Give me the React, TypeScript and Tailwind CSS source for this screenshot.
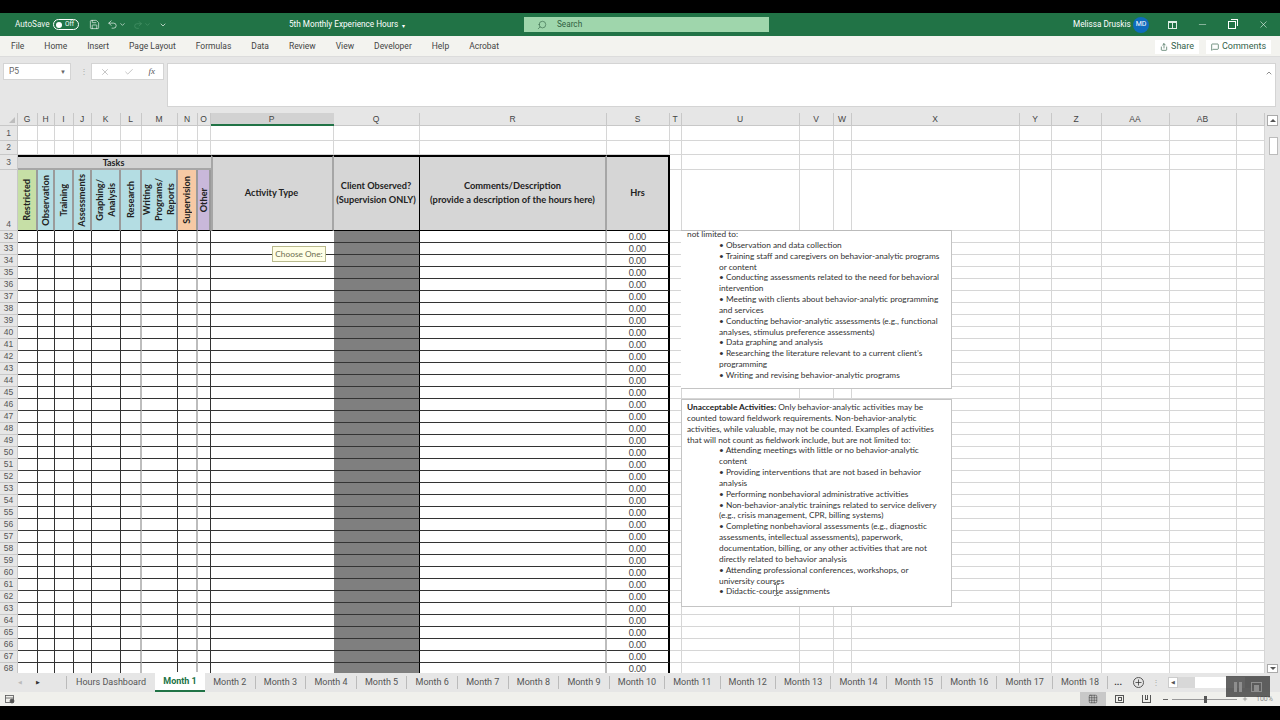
import { Check, ChevronDown, ChevronUp, Grid3x3, MessageSquare, Minus, Plus, Redo2, Save, Search, Share, Undo2, X } from 'lucide-react';

const uiFont = 'font-["Roboto","Open_Sans",sans-serif]';
const sheetFont = 'font-["Lato","Liberation_Sans",sans-serif]';

const menuItems = ['File', 'Home', 'Insert', 'Page Layout', 'Formulas', 'Data', 'Review', 'View', 'Developer', 'Help', 'Acrobat'];

const columns = ['G', 'H', 'I', 'J', 'K', 'L', 'M', 'N', 'O', 'P', 'Q', 'R', 'S', 'T', 'U', 'V', 'W', 'X', 'Y', 'Z', 'AA', 'AB', ''];

const taskHeaders = [
  { label: ['Restricted'], bg: 'bg-[#c6dfa6]' },
  { label: ['Observation'], bg: 'bg-[#b4dde3]' },
  { label: ['Training'], bg: 'bg-[#b4dde3]' },
  { label: ['Assessments'], bg: 'bg-[#b4dde3]' },
  { label: ['Graphing/', 'Analysis'], bg: 'bg-[#b4dde3]' },
  { label: ['Research'], bg: 'bg-[#b4dde3]' },
  { label: ['Writing', 'Programs/', 'Reports'], bg: 'bg-[#b4dde3]' },
  { label: ['Supervision'], bg: 'bg-[#f6c9a4]' },
  { label: ['Other'], bg: 'bg-[#c9b8da]' },
];

// per column border for the data rows, G through O
const dataCell = [
  'border-r border-r-[#333]',
  'border-r border-r-[#333]',
  'border-r border-r-[#333]',
  'border-r border-r-[#333]',
  'border-r border-r-[#333]',
  'border-r-2 border-r-[#bdbdbd]',
  'border-r border-r-[#333]',
  'border-r-2 border-r-[#bdbdbd]',
  'border-r border-r-[#333]',
];

const rows = Array.from({ length: 37 }, (_, i) => 32 + i);
const tabs = Array.from({ length: 17 }, (_, i) => `Month ${i + 2}`);

const acceptable = [
  'not limited to:',
  '• Observation and data collection',
  '• Training staff and caregivers on behavior-analytic programs',
  'or content',
  '• Conducting assessments related to the need for behavioral',
  'intervention',
  '• Meeting with clients about behavior-analytic programming',
  'and services',
  '• Conducting behavior-analytic assessments (e.g., functional',
  'analyses, stimulus preference assessments)',
  '• Data graphing and analysis',
  '• Researching the literature relevant to a current client’s',
  'programming',
  '• Writing and revising behavior-analytic programs',
];

const unacceptableIntro = [
  'counted toward fieldwork requirements. Non-behavior-analytic',
  'activities, while valuable, may not be counted. Examples of activities',
  'that will not count as fieldwork include, but are not limited to:',
];

const unacceptable = [
  '• Attending meetings with little or no behavior-analytic',
  'content',
  '• Providing interventions that are not based in behavior',
  'analysis',
  '• Performing nonbehavioral administrative activities',
  '• Non-behavior-analytic trainings related to service delivery',
  '(e.g., crisis management, CPR, billing systems)',
  '• Completing nonbehavioral assessments (e.g., diagnostic',
  'assessments, intellectual assessments), paperwork,',
  'documentation, billing, or any other activities that are not',
  'directly related to behavior analysis',
  '• Attending professional conferences, workshops, or',
  'university courses',
  '• Didactic-course assignments',
];

function RowNum({ children }: { children?: React.ReactNode }) {
  return (
    <div className="flex items-center justify-center bg-[#e6e6e6] border-r border-b border-[#c8c8c8] text-[8.5px] text-[#555] font-['Liberation_Sans',sans-serif] leading-none">
      {children}
    </div>
  );
}

function LightCells({ count }: { count: number }) {
  return (
    <>
      {Array.from({ length: count }, (_, i) => (
        <div key={i} className="border-r border-b border-[#d6d6d6] bg-white" />
      ))}
    </>
  );
}

export default function App() {
  return (
    <div className={`relative w-[1280px] h-[720px] bg-black flex flex-col overflow-hidden ${uiFont}`}>
      {/* top letterbox */}
      <div className="h-[13px] shrink-0" />

      {/* Title bar */}
      <div className="h-[23px] shrink-0 bg-[#217346] text-white flex items-center text-[8.2px]">
        <span className="ml-[15px] w-[38px] whitespace-nowrap text-[#f0f6f2]">AutoSave</span>
        <div className="flex items-center w-[26px] h-[11px] rounded-full border border-white pl-[2px] gap-[3px] text-[6.5px] leading-none">
          <span className="w-[6px] h-[6px] rounded-full bg-white" />
          Off
        </div>
        <Save className="ml-[10px] w-[11px] h-[11px]" strokeWidth={1.4} />
        <Undo2 className="ml-[7px] w-[11px] h-[11px]" strokeWidth={1.4} />
        <ChevronDown className="ml-[1px] w-[7px] h-[7px]" />
        <Redo2 className="ml-[7px] w-[10px] h-[10px] text-[#4f9a6f]" strokeWidth={1.4} />
        <ChevronDown className="ml-[1px] w-[7px] h-[7px] text-[#4f9a6f]" />
        <ChevronDown className="ml-[8px] w-[8px] h-[8px]" />
        <span className="ml-[122px] w-[235px] whitespace-nowrap">
          5th Monthly Experience Hours <span className="ml-[2px] text-[6px] align-middle">▾</span>
        </span>
        <div className="flex items-center w-[245px] h-[15px] bg-[#9fd6ac] text-[#2f5f41]">
          <Search className="ml-[13px] w-[10px] h-[10px] -scale-x-100" strokeWidth={1.4} />
          <span className="ml-[10px]">Search</span>
        </div>
        <span className="ml-[304px] w-[60px] whitespace-nowrap">Melissa Druskis</span>
        <div className="w-[16px] h-[16px] rounded-full bg-[#0f6cbd] flex items-center justify-center text-[7px]">MD</div>
        <div className="ml-[19px] w-[9px] h-[8px] border border-[#dfeee5] border-t-2 flex justify-center">
          <span className="w-px bg-[#dfeee5]" />
        </div>
        <Minus className="ml-[20px] w-[11px] h-[11px]" strokeWidth={1} />
        <div className="relative ml-[20px] w-[8px] h-[8px] border border-white">
          <span className="absolute -top-[3px] -right-[3px] w-[7px] h-[7px] border-t border-r border-white" />
        </div>
        <X className="ml-[22px] w-[11px] h-[11px]" strokeWidth={1.2} />
      </div>

      {/* Menu bar */}
      <div className="h-[20px] shrink-0 bg-[#f3f3ef] flex items-center pt-[1px] text-[8.5px] text-[#444]">
        <div className="ml-[11px] flex items-center gap-[20px]">
          {menuItems.map((item) => (
            <span key={item} className="whitespace-nowrap">{item}</span>
          ))}
        </div>
        <div className="ml-auto mr-[9px] flex items-center gap-[7px] text-[#33614a]">
          <div className="flex items-center justify-center gap-[3px] w-[44px] h-[14px] bg-white text-[9px]">
            <Share className="w-[8px] h-[8px]" />
            Share
          </div>
          <div className="flex items-center justify-center gap-[3px] w-[65px] h-[14px] bg-white text-[9px]">
            <MessageSquare className="w-[8px] h-[8px]" />
            Comments
          </div>
        </div>
      </div>

      {/* Formula bar */}
      <div className="h-[57px] shrink-0 bg-[#e6e6e6] border-t border-[#dcdcdc] flex items-start pt-[6px] text-[#666]">
        <div className="ml-[3px] w-[68px] h-[17px] bg-white border border-[#d4d4d4] flex items-center justify-between pl-[5px] pr-[4px] text-[8.5px]">
          P5
          <span className="text-[6px]">▼</span>
        </div>
        <span className="ml-[9px] w-[11px] text-[8px] leading-[17px] text-[#aaa]">⋮</span>
        <div className="w-[73px] h-[17px] bg-white border border-[#d4d4d4] flex items-center justify-around px-[1px] text-[#bbb]">
          <X className="w-[10px] h-[10px]" />
          <Check className="w-[10px] h-[10px]" />
          <span className="font-['Liberation_Serif',serif] italic text-[9px] text-[#555]">fx</span>
        </div>
        <div className="relative ml-[3px] w-[1109px] h-[44px] bg-white border border-[#d4d4d4]">
          <ChevronUp className="absolute right-[2px] top-[5px] w-[8px] h-[8px] text-[#555]" />
        </div>
      </div>

      {/* Sheet */}
      <div className="relative h-[560px] shrink-0 flex bg-white overflow-hidden">
        <div className="relative w-[1265px] h-full overflow-hidden">
          <div className={`grid grid-cols-[18px_20px_17px_19px_18px_29px_21px_36px_20px_13px_123px_86px_187px_63px_12px_118px_34px_18px_168px_32px_50px_68px_67px_28px] grid-rows-[13px_15px_14px_15px_61px_repeat(37,12px)] ${sheetFont}`}>
            {/* column letters */}
            <div className="bg-[#e6e6e6] border-r border-b border-[#c8c8c8] flex items-end justify-end pr-[2px] pb-[2px]">
              <span className="w-0 h-0 border-l-[6px] border-l-transparent border-b-[6px] border-b-[#bdbdbd]" />
            </div>
            {columns.map((col) => (
              <div
                key={col}
                className={`flex items-center justify-center text-[8.5px] leading-none text-[#444] font-['Liberation_Sans',sans-serif] ${
                  col === 'P'
                    ? 'bg-[#d2d2d2] pr-[2px] pt-[1px] border-b-2 border-b-[#217346]'
                    : 'bg-[#e6e6e6] pr-[1px] border-r border-r-[#c8c8c8] border-b border-b-[#c8c8c8]'
                }`}
              >
                {col}
              </div>
            ))}

            {/* rows 1 and 2 */}
            <RowNum>1</RowNum>
            <LightCells count={23} />
            <RowNum>2</RowNum>
            <LightCells count={23} />

            {/* rows 3 and 4, the table head */}
            <RowNum>3</RowNum>
            <div className="col-span-9 flex items-center justify-center pr-[2px] bg-[#d2d2d2] border-t-2 border-t-black border-b-2 border-b-[#a6a6a6] text-[9px] font-bold text-[#222] leading-none">
              Tasks
            </div>
            <div className="row-span-2 flex items-center justify-center pr-[2px] pb-[1px] bg-[#d6d6d6] border-t-2 border-t-black border-l-2 border-l-[#a6a6a6] border-r-2 border-r-[#a6a6a6] border-b border-b-black text-[9.2px] font-bold text-[#222]">
              Activity Type
            </div>
            <div className="row-span-2 flex items-center justify-center text-center pr-[1px] pb-[2px] bg-[#d6d6d6] border-t-2 border-t-black border-r border-r-black border-b border-b-black text-[9.2px] leading-[13.5px] font-bold text-[#222]">
              Client Observed?<br />(Supervision ONLY)
            </div>
            <div className="row-span-2 flex items-center justify-center text-center pb-[2px] bg-[#d6d6d6] border-t-2 border-t-black border-r-2 border-r-[#a6a6a6] border-b border-b-black text-[9.3px] leading-[13.5px] font-bold text-[#222]">
              Comments/Description<br />(provide a description of the hours here)
            </div>
            <div className="row-span-2 flex items-center justify-center pb-[1px] bg-[#d6d6d6] border-t-2 border-t-black border-r-2 border-r-black border-b border-b-black text-[9.2px] font-bold text-[#222]">
              Hrs
            </div>
            <LightCells count={10} />

            <div className="flex items-end justify-center bg-[#e6e6e6] border-r border-b border-[#c8c8c8] text-[8.5px] text-[#555] font-['Liberation_Sans',sans-serif] leading-none pb-[2px]">
              4
            </div>
            {taskHeaders.map((task) => (
              <div
                key={task.label[0]}
                className={`flex items-center justify-center ${task.bg} border-r-2 border-r-[#9a9a9a] border-b border-b-black`}
              >
                <div className="[writing-mode:vertical-rl] rotate-180 text-center text-[9.2px] leading-[12px] font-bold text-[#222] whitespace-nowrap">
                  {task.label.map((line) => (
                    <div key={line}>{line}</div>
                  ))}
                </div>
              </div>
            ))}
            <LightCells count={10} />

            {/* data rows */}
            {rows.map((row) => (
              <div key={row} className="contents">
                <RowNum>{row}</RowNum>
                {dataCell.map((cls, i) => (
                  <div key={i} className={`bg-white border-b border-b-[#333] ${cls}`} />
                ))}
                <div className="bg-white border-b border-b-[#333]" />
                <div className="bg-[#7f7f7f] border-b border-b-[#333] border-r border-r-black" />
                <div className="bg-white border-b border-b-[#333] border-r-2 border-r-[#bdbdbd]" />
                <div className="flex items-center justify-center pt-[1px] bg-white border-b border-b-[#333] border-r-2 border-r-black text-[8.8px] leading-none text-[#444]">
                  0.00
                </div>
                <LightCells count={10} />
              </div>
            ))}
          </div>

          {/* text boxes floating over the sheet */}
          <div className={`absolute left-[681px] top-[117px] w-[271px] h-[159px] bg-white border-t border-t-[#bbb] border-b border-r border-[#c4c4c4] overflow-hidden text-[8.3px] leading-[10.85px] text-[#333] ${sheetFont}`}>
            <p className="pl-[6px] -mt-[2px]">{acceptable[0]}</p>
            <div className="pl-[38px] whitespace-nowrap">
              {acceptable.slice(1).map((line) => (
                <p key={line}>{line}</p>
              ))}
            </div>
          </div>
          <div className={`absolute left-[681px] top-[286px] w-[271px] h-[208px] bg-white border border-[#c4c4c4] pt-[2px] text-[8.3px] leading-[10.85px] text-[#333] ${sheetFont}`}>
            <div className="pl-[5px] whitespace-nowrap">
              <p><b className="text-[#222]">Unacceptable Activities:</b> Only behavior-analytic activities may be</p>
              {unacceptableIntro.map((line) => (
                <p key={line}>{line}</p>
              ))}
            </div>
            <div className="pl-[37px] whitespace-nowrap">
              {unacceptable.map((line) => (
                <p key={line}>{line}</p>
              ))}
            </div>
          </div>

          {/* data validation hint */}
          <div className={`absolute left-[272px] top-[133px] w-[54px] h-[16px] flex items-center justify-center bg-[#ffffe6] border border-[#b9b98c] text-[8.3px] text-[#6e6e50] ${sheetFont}`}>
            Choose One:
          </div>

          {/* mouse cursor */}
          <svg className="absolute left-[773px] top-[471px]" width="7" height="12" viewBox="0 0 7 12" fill="none" stroke="#666" strokeWidth="0.8">
            <path d="M1 .5h2l.5.5.5-.5h2M3.5 1v10M1 11.5h2l.5-.5.5.5h2" />
          </svg>
        </div>

        {/* vertical scrollbar */}
        <div className="w-[15px] h-full bg-[#e6e6e6] flex flex-col items-center pt-[2px]">
          <div className="w-[11px] h-[11px] bg-white border border-[#aaa] flex items-center justify-center">
            <span className="w-0 h-0 border-x-[3px] border-x-transparent border-b-[3px] border-b-[#555]" />
          </div>
          <div className="mt-[11px] ml-[2px] w-[9px] h-[18px] bg-white border border-[#bbb]" />
          <div className="mt-auto mb-0 w-[11px] h-[9px] bg-white border border-[#aaa] flex items-center justify-center">
            <span className="w-0 h-0 border-x-[3px] border-x-transparent border-t-[3px] border-t-[#555]" />
          </div>
        </div>
      </div>

      {/* Sheet tabs */}
      <div className="relative h-[19px] shrink-0 bg-[#e6e6e6] flex items-center text-[9px] text-[#555]">
        <span className="ml-[18px] text-[5px] text-[#bbb]">◀</span>
        <span className="ml-[14px] text-[5px] text-[#333]">▶</span>
        <span className="ml-[26px] w-px h-[13px] bg-[#bbb]" />
        <div className="flex items-stretch h-full">
          <div className="flex items-center px-[9px] whitespace-nowrap w-[88px] justify-center">Hours Dashboard</div>
          <div className="flex items-center justify-center w-[50px] -mt-[1px] pt-[1px] bg-white border-b-2 border-b-[#217346] font-bold text-[#217346] whitespace-nowrap">
            Month 1
          </div>
          {tabs.map((tab, i) => (
            <div key={tab} className="flex items-center">
              <div className={`flex items-center justify-center whitespace-nowrap ${i < 8 ? 'w-[49.6px]' : 'w-[54.4px]'}`}>{tab}</div>
              <span className="w-px h-[13px] bg-[#bbb]" />
            </div>
          ))}
        </div>
        <div className="ml-auto mr-[20px] flex items-center">
          <span className="font-bold text-[#333]">...</span>
          <Plus className="ml-[11px] w-[11px] h-[11px] rounded-full border border-[#555] text-[#333]" />
          <span className="ml-[8px] text-[8px] text-[#aaa]">⋮</span>
          <div className="ml-[8px] w-[10px] h-[11px] bg-white border border-[#ccc] flex items-center justify-center text-[5px]">◀</div>
          <div className="w-[82px] h-[11px] bg-[#d8d8d8] pl-[17px]">
            <div className="w-[50px] h-full bg-white" />
          </div>
        </div>
      </div>

      {/* Status bar */}
      <div className="h-[14px] shrink-0 bg-[#f0f0ec] flex items-center text-[#666]">
        <svg className="ml-[5px]" width="10" height="9" viewBox="0 0 10 9" fill="none" stroke="#555" strokeWidth="0.8">
          <rect x="0.5" y="0.5" width="8" height="7" />
          <path d="M0.5 3h8" />
          <circle cx="7" cy="6" r="2" fill="#555" />
        </svg>
        <div className="ml-[1065px] w-[26px] h-full bg-[#c8c8c8] flex items-center justify-center">
          <Grid3x3 className="w-[10px] h-[10px] text-[#333]" strokeWidth={1.2} />
        </div>
        <div className="ml-[9px] w-[9px] h-[8px] border border-[#555] flex items-center justify-center">
          <span className="w-[4px] h-[4px] border border-[#555]" />
        </div>
        <div className="ml-[18px] w-[9px] h-[8px] border border-[#555] border-t-0 flex justify-center">
          <span className="w-[3px] h-[5px] border-x border-b border-[#555]" />
        </div>
        <span className="ml-[12px] w-[5px] h-px bg-[#666]" />
        <div className="relative ml-[4px] w-[65px] h-px bg-[#999]">
          <span className="absolute left-[32px] -top-[3px] w-[3px] h-[7px] bg-[#555]" />
        </div>
        <Plus className="ml-[5px] w-[6px] h-[6px]" />
        <span className="ml-[8px] text-[7px] text-[#888]">100%</span>
      </div>

      {/* bottom letterbox */}
      <div className="flex-1" />

      {/* video player controls over the page */}
      <div className="absolute left-[1226px] top-[676px] w-[44px] h-[21px] bg-[#3c3c3c]/80 flex items-center justify-center gap-[9px]">
        <div className="flex gap-[2px]">
          <span className="w-[3px] h-[10px] bg-[#8e8e8e]" />
          <span className="w-[3px] h-[10px] bg-[#8e8e8e]" />
        </div>
        <div className="w-[11px] h-[10px] border border-[#8e8e8e] flex items-end justify-center">
          <span className="w-[5px] h-[6px] bg-[#8e8e8e]" />
        </div>
      </div>
    </div>
  );
}
